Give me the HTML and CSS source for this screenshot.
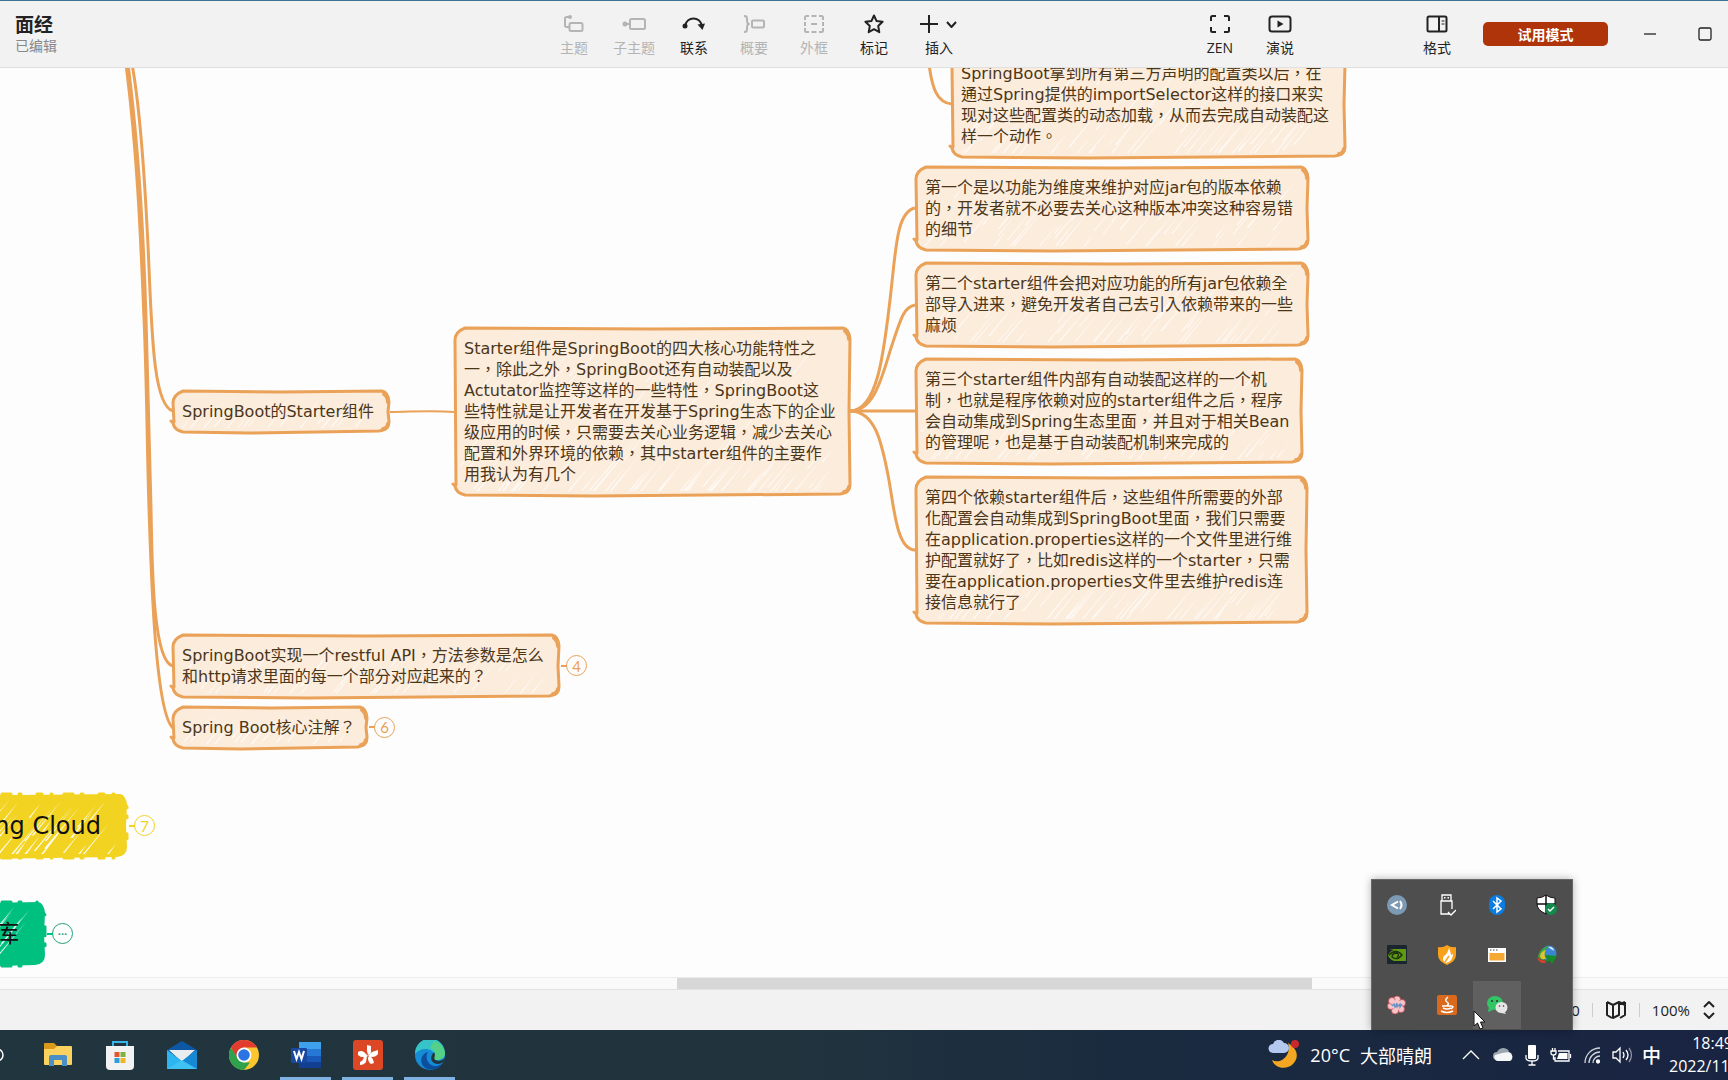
FILE: index.html
```html
<!DOCTYPE html>
<html lang="zh-CN">
<head>
    <meta charset="UTF-8">
    <meta name="viewport" content="width=device-width, initial-scale=1.0">
    <title>面经</title>
    <link rel="stylesheet" href="styles.css">
</head>
<body>
    <header class="header">
        <div class="doc-info">
            <h1>面经</h1>
            <p>已编辑</p>
        </div>
        <div class="tools">
            <button class="tool" disabled>
                <svg width="22" height="22" viewBox="0 0 22 22"><path d="M6 4H3.5a1.5 1.5 0 0 0-1.500 1.500v7A1.500 1.500 0 0 0 3.500 14H6"/><rect x="6.500" y="10" width="13" height="8" rx="1.500"/><circle class="dot" cx="7" cy="4" r="2"/></svg>
                <span>主题</span>
            </button>
            <button class="tool" disabled>
                <svg width="24" height="22" viewBox="0 0 24 22"><rect x="8" y="6" width="15" height="10" rx="1.500"/><path d="M3 11h5"/><circle class="dot" cx="3" cy="11" r="2.500"/></svg>
                <span>子主题</span>
            </button>
            <button class="tool">
                <svg width="24" height="22" viewBox="0 0 24 22"><path d="M3 13C5 3 18 3 20 13"/><circle class="dot" cx="3" cy="13" r="2.500"/><path class="dot" d="M15.500 11.500l7.500-1-2.500 6.500z"/></svg>
                <span>联系</span>
            </button>
            <button class="tool" disabled>
                <svg width="24" height="22" viewBox="0 0 24 22"><path d="M2 3c3 0 3 1 3 4 0 2 0 4 2 4-2 0-2 2-2 4 0 3 0 4-3 4"/><rect x="10" y="7.500" width="12" height="7" rx="1"/></svg>
                <span>概要</span>
            </button>
            <button class="tool" disabled>
                <svg width="24" height="22" viewBox="0 0 24 22"><path d="M7 3H4.500A1.500 1.500 0 0 0 3 4.500V7M3 9v4M3 15v2.500A1.500 1.500 0 0 0 4.500 19H7M9.500 19h5M17 19h2.500a1.500 1.500 0 0 0 1.500-1.500V15M21 13V9M21 7V4.500A1.500 1.500 0 0 0 19.500 3H17M14.500 3h-5M9 11h6"/></svg>
                <span>外框</span>
            </button>
            <button class="tool">
                <svg width="22" height="22" viewBox="0 0 22 22"><path d="M11 2.500l2.600 5.600 6 .7-4.400 4.200 1.100 6.200-5.300-3-5.300 3 1.100-6.200L2.400 8.800l6-.7z"/></svg>
                <span>标记</span>
            </button>
            <button class="tool tool-insert">
                <svg width="38" height="22" viewBox="0 0 38 22"><path d="M9 2v18M0 11h18M27 9l4.500 5L36 9"/></svg>
                <span>插入</span>
            </button>
        </div>
        <div class="tools view-tools">
            <button class="tool">
                <svg width="22" height="22" viewBox="0 0 22 22"><path d="M7 3H3.500a1.500 1.500 0 0 0-1.500 1.500V8M2 14v3.500A1.500 1.500 0 0 0 3.500 19H7M15 19h3.500a1.500 1.500 0 0 0 1.500-1.500V14M20 8V4.500A1.500 1.500 0 0 0 18.500 3H15"/></svg>
                <span>ZEN</span>
            </button>
            <button class="tool">
                <svg width="24" height="22" viewBox="0 0 24 22"><rect x="1.500" y="3.500" width="21" height="15" rx="2.500"/><path class="dot" d="M9.500 7.500v7l6-3.500z"/></svg>
                <span>演说</span>
            </button>
        </div>
        <button class="tool format-tool">
            <svg width="22" height="22" viewBox="0 0 22 22"><rect x="1.500" y="3.500" width="19" height="15" rx="1.500"/><path d="M13 3.500v15"/><path class="fine" d="M15.500 8h3M15.500 11h3"/></svg>
            <span>格式</span>
        </button>
        <button class="trial-btn">试用模式</button>
        <div class="window-btns">
            <button aria-label="最小化"><svg width="14" height="14" viewBox="0 0 14 14"><path d="M1 7h12"/></svg></button>
            <button aria-label="最大化"><svg width="14" height="14" viewBox="0 0 14 14"><rect x="1" y="1" width="12" height="12" rx="1.500"/></svg></button>
        </div>
    </header>

    <!-- zh-TW keeps the full-width punctuation centred in the nodes -->
    <main class="canvas" lang="zh-TW">
        <svg class="links" width="1400" height="900" viewBox="0 0 1400 900">
            <path d="M132 -4C141 45 146 130 149 200S154 338 173 343"/>
            <path d="M128 -4C140 90 144 180 146 250S150 380 151 440S153 594 173 598"/>
            <path d="M126 -4C138 90 141 180 144 250S147 380 149 440S155 645 173 660"/>
            <path class="thin" d="M390 344c20 0 40-2 64 0"/>
            <path d="M850 343C878 343 884 282 890 232S896 144 915 140"/>
            <path d="M850 343C876 343 883 304 892 277S904 239 915 237"/>
            <path d="M850 343h65"/>
            <path d="M850 343C876 343 882 377 888 407S896 482 915 482"/>
            <path d="M929 -4C932 20 937 35 952 36"/>
        </svg>

        <div class="node node-import">SpringBoot拿到所有第三方声明的配置类以后，在<br>通过Spring提供的importSelector这样的接口来实<br>现对这些配置类的动态加载，从而去完成自动装配这<br>样一个动作。</div>
        <div class="node node-first">第一个是以功能为维度来维护对应jar包的版本依赖<br>的，开发者就不必要去关心这种版本冲突这种容易错<br>的细节</div>
        <div class="node node-second">第二个starter组件会把对应功能的所有jar包依赖全<br>部导入进来，避免开发者自己去引入依赖带来的一些<br>麻烦</div>
        <div class="node node-third">第三个starter组件内部有自动装配这样的一个机<br>制，也就是程序依赖对应的starter组件之后，程序<br>会自动集成到Spring生态里面，并且对于相关Bean<br>的管理呢，也是基于自动装配机制来完成的</div>
        <div class="node node-fourth">第四个依赖starter组件后，这些组件所需要的外部<br>化配置会自动集成到SpringBoot里面，我们只需要<br>在application.properties这样的一个文件里进行维<br>护配置就好了，比如redis这样的一个starter，只需<br>要在application.properties文件里去维护redis连<br>接信息就行了</div>
        <div class="node node-detail">Starter组件是SpringBoot的四大核心功能特性之<br>一，除此之外，SpringBoot还有自动装配以及<br>Actutator监控等这样的一些特性，SpringBoot这<br>些特性就是让开发者在开发基于Spring生态下的企业<br>级应用的时候，只需要去关心业务逻辑，减少去关心<br>配置和外界环境的依赖，其中starter组件的主要作<br>用我认为有几个</div>
        <div class="node node-starter">SpringBoot的Starter组件</div>
        <div class="node node-restful">SpringBoot实现一个restful API，方法参数是怎么<br>和http请求里面的每一个部分对应起来的？<button class="fold">4</button></div>
        <div class="node node-notes">Spring Boot核心注解？<button class="fold">6</button></div>
        <div class="node topic topic-cloud">Spring Cloud<button class="fold">7</button></div>
        <div class="node topic topic-db">数据库<button class="fold fold-more">···</button></div>
    </main>

    <div class="scrollbar"><div class="thumb"></div></div>

    <footer class="statusbar">
        <span class="count">0</span>
        <span class="sep"></span>
        <button aria-label="导航"><svg width="22" height="22" viewBox="0 0 22 22"><path d="M2 3l6 3 6-3 6 3M2 3v13l5 3M20 3v13l-5 3M8 6v13l6-3V3M20 3l-5 2"/></svg></button>
        <span class="sep"></span>
        <span class="zoom">100%</span>
        <button aria-label="缩放"><svg width="14" height="20" viewBox="0 0 14 20"><path d="M2 7l5-5 5 5M2 13l5 5 5-5"/></svg></button>
    </footer>

    <nav class="taskbar">
        <svg class="search" width="4" height="14" viewBox="0 0 4 14"><circle cx="-3" cy="7" r="6"/></svg>
        <div class="apps">
            <button aria-label="文件资源管理器"><svg width="30" height="30" viewBox="0 0 30 30"><path fill="#d99a1c" d="M1 4q0-1 1-1h9l3 3v6H1z"/><path fill="#fbd25d" d="M1 9h10l3-3h14q1 0 1 1v17q0 1-1 1H2q-1 0-1-1z"/><path fill="#4a90c8" d="M6 26V17q0-2 2-2h14q2 0 2 2v9h-5v-6h-8v6z"/></svg></button>
            <button aria-label="Microsoft Store"><svg width="30" height="30" viewBox="0 0 30 30"><path fill="none" stroke="#38b4e8" stroke-width="2" d="M8 7V2h14v5"/><path fill="#f2f2f2" d="M1 6h28v20q0 4-4 4H5q-4 0-4-4z"/><path fill="#e0582d" d="M9.500 12h5v5h-5z"/><path fill="#7eb23a" d="M15.500 12h5v5h-5z"/><path fill="#2b9fd8" d="M9.500 18h5v5h-5z"/><path fill="#f0b428" d="M15.500 18h5v5h-5z"/></svg></button>
            <button aria-label="邮件"><svg width="30" height="30" viewBox="0 0 30 30"><path fill="#0d57a4" d="M0 10L15 1l15 9v5H0z"/><path fill="#e9edf0" d="M2 10h26L15 22z"/><path fill="#2cb5ee" d="M0 10l15 11 15-11v19H0z"/><path fill="#1688d4" d="M15 21l15-11v19z"/><path fill="#4cc9f5" d="M0 29h30L15 20z" opacity=".6"/></svg></button>
            <button aria-label="Chrome"><svg width="30" height="30" viewBox="0 0 30 30"><circle cx="15" cy="15" r="15" fill="#fbc62f"/><path fill="#e23b30" d="M2 7.500A15 15 0 0 1 28 7.500H15L8.500 19z"/><path fill="#2da14b" d="M2 7.500L9 19l6 3.500h6L15 30A15 15 0 0 1 2 7.500z"/><circle cx="15" cy="15" r="7.500" fill="#fff"/><circle cx="15" cy="15" r="5.800" fill="#2c74e4"/></svg></button>
            <button class="open" aria-label="Word"><svg width="30" height="30" viewBox="0 0 30 30"><path fill="#3fa0ec" d="M8 2h22v7H8z"/><path fill="#2778d4" d="M8 9h22v7H8z"/><path fill="#1a58b8" d="M8 16h22v6H8z"/><path fill="#123f92" d="M8 22h22v6H8z"/><rect y="8" width="16" height="15" rx="1" fill="#1848a0"/><path fill="none" stroke="#fff" stroke-width="2" d="M3 11l2.500 8L8 12l2.500 7L13 11"/></svg></button>
            <button class="open" aria-label="XMind"><svg width="30" height="30" viewBox="0 0 30 30"><rect width="30" height="30" rx="3" fill="#dc4726"/><path fill="#fff" d="M14 5l4 1v6q0 2-3 3l-1-4zM19 12l6-2v4q-2 3-6 3l-4-1zM5 12q3-2 6 0l4 4-2 1q-5 1-8-2zM14 16l-1 6q-2 3-6 3v-3q3-1 4-5zM16 16q4 1 5 7l-3 1q-3-2-3-6z"/></svg></button>
            <button class="open" aria-label="Edge"><svg width="30" height="30" viewBox="0 0 30 30"><circle cx="15" cy="15" r="15" fill="#168bd6"/><path fill="#36c4c8" d="M0 14A15 15 0 0 1 30 13c0 5-4 7-8 7-5 0-4-2-3-4 1-8-13-10-19-2z"/><path fill="#5dd475" d="M19 1a15 15 0 0 1 11 12c0 5-4 7-8 7-4 0-5-2-3-4 2-4 0-7-4-8z" opacity=".8"/><path fill="#0c4e9c" d="M13 12c-4 6 1 15 9 14l5-2c-4 7-13 7-18 3-5-5-3-13 4-15z"/><path fill="#21353f" d="M19 12c3 5-3 7 4 9 3 0 5-1 7-3 0 3-3 6-7 6-7 0-9-7-4-12z"/></svg></button>
        </div>
        <button class="weather">
            <svg width="32" height="30" viewBox="0 0 32 30"><path fill="#f5a623" d="M20 3c9 5 12 14 5 21-6 6-18 5-21-4 9 5 20-5 16-17z"/><circle cx="27" cy="4" r="4" fill="#c9282d"/><path fill="#b4c8f0" d="M5 13a4.500 4.500 0 0 1 0-9 6 6 0 0 1 11-1 5 5 0 0 1 0 10z"/></svg>
            <span>20°C</span>
            <span>大部晴朗</span>
        </button>
        <div class="tray">
            <button aria-label="显示隐藏的图标"><svg width="20" height="20" viewBox="0 0 20 20"><path d="M2 14l8-8 8 8"/></svg></button>
            <button aria-label="OneDrive"><svg width="22" height="20" viewBox="0 0 22 20"><path fill="#9ba5ad" stroke="none" d="M5 15a4 4 0 0 1 0-8 7 7 0 0 1 12-1l-7 9z"/><path fill="#f4f6f8" stroke="none" d="M5 16a4 4 0 0 1-2-6l7-2 7-1a5 5 0 0 1 1 9z"/></svg></button>
            <button aria-label="麦克风"><svg width="14" height="22" viewBox="0 0 14 22"><rect x="3" y="1" width="8" height="14" rx="1" fill="#fff" stroke="none"/><path d="M1 11v3q0 3 6 3t6-3v-3M7 17v4M3.500 21h7"/></svg></button>
            <button aria-label="电池"><svg width="22" height="18" viewBox="0 0 22 18"><path d="M8 5h11v10H5v-4"/><path fill="#fff" stroke="none" d="M9 7h8.500v6H7z"/><path d="M20.500 8v4M1 5h5v2q0 2-2.500 2T1 7zM2.500 2v3M5 2v3M3.500 9v4H5"/></svg></button>
            <button aria-label="网络"><svg width="18" height="18" viewBox="0 0 18 18"><path d="M2 17A15 15 0 0 1 17 2M6 17A11 11 0 0 1 17 6M10 17a7 7 0 0 1 7-7" opacity=".8"/><circle cx="15" cy="15.500" r="1.500" fill="#fff"/></svg></button>
            <button aria-label="音量"><svg width="22" height="18" viewBox="0 0 22 18"><path d="M1 6h3l4-4v14l-4-4H1zM11 6q2 3 0 6M14 4q4 5 0 10"/><path opacity=".5" d="M17 2q5 7 0 14"/></svg></button>
            <button class="ime">中</button>
        </div>
        <div class="clock">
            <span class="time">18:49</span>
            <span>2022/11</span>
        </div>

        <div class="tray-popup">
            <button aria-label="音频"><svg width="22" height="22" viewBox="0 0 22 22"><circle cx="11" cy="11" r="10" fill="#7d9ab5"/><path fill="none" stroke="#fff" stroke-width="2" d="M12 7.500L6 11l6 3.500M14 7q3 4 0 8"/></svg></button>
            <button aria-label="USB"><svg width="18" height="22" viewBox="0 0 18 22"><path fill="none" stroke="#fff" stroke-width="1.300" d="M4 7V1h9v6M12 20H3V7h11v8M10 18l3 3 5-5"/><path fill="#fff" d="M6 3h1.500v1.500H6zM9.500 3H11v1.500H9.500z"/></svg></button>
            <button aria-label="蓝牙"><svg width="18" height="22" viewBox="0 0 18 22"><rect x="1" y="1" width="16" height="20" rx="8" fill="#0b7ce0"/><path fill="none" stroke="#fff" stroke-width="1.500" d="M5 7l8 8-4 3V4l4 3-8 8"/></svg></button>
            <button aria-label="安全中心"><svg width="24" height="22" viewBox="0 0 24 22"><path fill="#fff" stroke="#111" d="M11 1q4 3 9 3v6q0 6-9 10-9-4-9-10V4q5 0 9-3z"/><path stroke="#111" stroke-width="1.500" d="M11 1v19M2 10h18"/><circle cx="16" cy="15" r="6" fill="#128a4c"/><path fill="none" stroke="#fff" stroke-width="1.500" d="M13 15l2 2 4-4"/></svg></button>
            <button aria-label="NVIDIA"><svg width="22" height="22" viewBox="0 0 22 22"><rect x="1" y="1" width="20" height="19" rx="1" fill="#1b2530"/><path fill="#5f9a12" d="M3 5h17v12H8q-5-2-6-6 2-4 6-5z"/><path fill="none" stroke="#1d3010" stroke-width="1.300" d="M3 11q7-7 13 0-5 6-10 2 0-4 5-4 3 2 0 4"/></svg></button>
            <button aria-label="火绒"><svg width="20" height="22" viewBox="0 0 20 22"><path fill="#f9a11b" d="M1 3q5 1 9-2 4 3 9 2v8q0 6-9 10-9-4-9-10z"/><path fill="#fff" d="M12 4q2 5 2 7l2-1q0 7-7 9-5-3-2-7 4-3 5-8z"/><path stroke="#f9a11b" stroke-width="1.500" d="M8 18l4-6"/></svg></button>
            <button aria-label="窗口"><svg width="20" height="18" viewBox="0 0 20 18"><path fill="#fff" d="M1 2h18v14H1z"/><path fill="#f5a833" d="M2.500 7h15v7.500h-15z"/><path stroke="#444" d="M3 4h1.500M6 4h1.500M9 4h1.500"/></svg></button>
            <button aria-label="IDM"><svg width="22" height="22" viewBox="0 0 22 22"><circle cx="13" cy="9" r="7.500" fill="#3985d2"/><path fill="#3ea33c" d="M2 12Q4 3 14 2q-7 3-6 14-5 0-6-4z"/><path fill="#e2c52c" d="M4 12q1-5 6-6-3 4 0 9-5 1-6-3z"/><path fill="#d8402c" d="M1 13q5 5 10 3l-2 3q-6 1-8-6z"/><path fill="#158c28" d="M9 11l12 1-5 8-2-3-5 1 2-3z"/><path fill="#dceaf8" d="M12 3q5-1 6 4-3-2-6-4z"/></svg></button>
            <button aria-label="输入法"><svg width="20" height="20" viewBox="0 0 20 20"><g fill="#f7c4c9" stroke="#c5434c" stroke-width=".7"><circle cx="10" cy="4.500" r="3.500"/><circle cx="15" cy="8" r="3.500"/><circle cx="14" cy="14" r="3.500"/><circle cx="8" cy="15.500" r="3.500"/><circle cx="4" cy="11" r="3.500"/><circle cx="5" cy="6" r="3.500"/></g><circle cx="10" cy="10" r="5" fill="#f7c4c9"/><path fill="none" stroke="#5f8fc5" stroke-width="1.300" d="M5 11l2-2 1 3 2-4v4l3-3v3l2-3"/></svg></button>
            <button aria-label="Java"><svg width="22" height="22" viewBox="0 0 22 22"><rect x="1" y="1" width="20" height="20" rx="2" fill="#d8691d"/><path fill="none" stroke="#fff" stroke-width="1.500" d="M12 3q-4 3-1 5t0 3M6 12h9q4 0 0 3M7 14q4 2 8 0M5 17q6 3 12 0"/></svg></button>
            <button class="hover" aria-label="微信"><svg width="22" height="20" viewBox="0 0 22 20"><ellipse cx="9" cy="8" rx="8" ry="7" fill="#31c566"/><path fill="#31c566" d="M3 12l-1 5 5-2z"/><ellipse cx="15.500" cy="12.500" rx="6" ry="5.500" fill="#e6e6e6"/><path fill="#e6e6e6" d="M18 16l2 3-5-1z"/><g fill="#333"><circle cx="6" cy="6" r="1"/><circle cx="11" cy="6" r="1"/><circle cx="13.500" cy="11" r=".8"/><circle cx="17.500" cy="11" r=".8"/></g></svg></button>
            <svg class="cursor" width="14" height="20" viewBox="0 0 14 20"><path fill="#fff" stroke="#111" d="M1 1v15l3.500-3 2.500 6 3-1-2.500-6H12z"/></svg>
        </div>
    </nav>

    <script src="sketch.js"></script>
</body>
</html>
```

FILE: styles.css
```css
* {
    box-sizing: border-box;
}
body {
    margin: 0;
    height: 100vh;
    display: flex;
    flex-direction: column;
    overflow: hidden;
    font-family: "Open Sans", "Noto Sans CJK SC", sans-serif;
    font-size: 14px;
    color: #222;
    background-color: #fdfdfd;
}
button {
    padding: 0;
    border: 0;
    background: none;
    font: inherit;
    color: inherit;
    display: flex;
    align-items: center;
    justify-content: center;
}
svg {
    display: block;
    flex: none;
}

/* header */
.header {
    height: 68px;
    flex: none;
    display: flex;
    align-items: center;
    background-color: #f2f2f2;
    border-top: 1px solid #3f7396;
    border-bottom: 1px solid #e0e0e0;
}
.doc-info {
    flex: 543 1 0;
    padding: 2px 0 0 15px;
}
.doc-info h1 {
    margin: 0;
    font-size: 19px;
    line-height: 22px;
}
.doc-info p {
    margin: 0;
    line-height: 20px;
    color: #85878b;
}
.tools {
    display: flex;
}
.tool {
    width: 60px;
    padding-top: 2px;
    flex-direction: column;
    gap: 3px;
    line-height: 20px;
}
.tool svg {
    fill: none;
    stroke: #222;
    stroke-width: 2;
    stroke-linejoin: round;
}
.tool .fine {
    stroke-width: 1;
}
.tool .dot {
    fill: #222;
    stroke: none;
}
.tool:disabled {
    color: #b4b4b4;
}
.tool:disabled svg {
    stroke: #b4b4b4;
}
.tool:disabled .dot {
    fill: #b4b4b4;
}
.tool-insert {
    width: 70px;
}
.view-tools {
    margin-left: 216px;
}
.format-tool {
    margin-left: 97px;
}
.trial-btn {
    width: 125px;
    height: 24px;
    margin-left: 16px;
    border-radius: 5px;
    background-color: #b0340a;
    color: #fff;
    font-weight: bold;
}
.window-btns {
    display: flex;
    gap: 41px;
    margin: 0 16px 0 35px;
}
.window-btns svg {
    fill: none;
    stroke: #222;
    stroke-width: 1.3;
}

/* mind map */
.canvas {
    position: relative;
    flex: 1;
    overflow: hidden;
}
.links {
    position: absolute;
    top: 0;
    left: 0;
    z-index: 0;
    fill: none;
    stroke: #eaa158;
    stroke-width: 3;
}
.links .thin {
    stroke-width: 2;
}
.node {
    position: absolute;
    z-index: 0;
    padding: 11px;
    font-family: "DejaVu Sans", "Noto Sans CJK TC", sans-serif;
    font-size: 16px;
    line-height: 21px;
    white-space: nowrap;
    color: #4b3618;
    --line: #eaa158;
    --fill: #fcecdc;
}
.sketch {
    position: absolute;
    top: 0;
    left: 0;
    z-index: -1;
    overflow: visible;
}
.sketch .shape {
    fill: var(--fill);
}
.sketch .edge {
    fill: none;
    stroke: var(--line);
    stroke-width: 3;
    stroke-linecap: round;
    stroke-linejoin: round;
}
.sketch .corner {
    fill: none;
    stroke: var(--line);
    stroke-width: 4;
    stroke-linecap: round;
}
.sketch .hatch {
    fill: #fff;
    opacity: 0.7;
}
.sketch .rough {
    fill: none;
    stroke: var(--fill);
    stroke-width: 3;
    stroke-linecap: round;
    stroke-dasharray: 5 9 1 12 9 8 2 16;
}
.node-import {
    left: 950px;
    top: -16px;
    width: 397px;
}
.node-first {
    left: 914px;
    top: 98px;
    width: 396px;
}
.node-second {
    left: 914px;
    top: 194px;
    width: 396px;
}
.node-third {
    left: 914px;
    top: 290px;
    width: 390px;
}
.node-fourth {
    left: 914px;
    top: 408px;
    width: 395px;
}
.node-detail {
    left: 453px;
    top: 259px;
    width: 399px;
}
.node-starter {
    left: 171px;
    top: 322px;
    width: 220px;
}
.node-restful {
    left: 171px;
    top: 566px;
    width: 390px;
}
.node-notes {
    left: 171px;
    top: 638px;
    width: 198px;
}
.topic {
    padding: 20px 28px;
    font-size: 24px;
    line-height: 26px;
    color: #111;
    text-align: right;
}
.topic-cloud {
    left: -91px;
    top: 725px;
    width: 220px;
    --line: #f3d321;
    --fill: #f3d321;
}
.topic-db {
    left: -91px;
    top: 833px;
    width: 138px;
    --line: #00c07f;
    --fill: #00c07f;
}
.topic .hatch {
    opacity: 0.9;
}
.topic-db .fold {
    border-color: #22a078;
    color: #22a078;
}
.fold {
    position: absolute;
    left: calc(100% + 5px);
    top: calc(50% - 11px);
    width: 21px;
    height: 21px;
    border: 1px solid var(--line);
    border-radius: 50%;
    font-family: Lato, sans-serif;
    font-size: 15px;
    line-height: 20px;
    color: var(--line);
}
.fold-more {
    font-size: 12px;
}
.fold::before {
    content: "";
    position: absolute;
    right: 100%;
    width: 6px;
    height: 2px;
    background-color: var(--line);
}

/* scrollbar and status bar */
.scrollbar {
    height: 12px;
    flex: none;
    display: flex;
    background-color: #fafafa;
    border-top: 1px solid #ececec;
}
.thumb {
    width: 36.7%;
    margin-left: 39.2%;
    background-color: #d7d7d7;
}
.statusbar {
    height: 41px;
    flex: none;
    display: flex;
    align-items: center;
    justify-content: flex-end;
    gap: 12px;
    padding-right: 12px;
    font-size: 15px;
    background-color: #f2f2f2;
    border-top: 1px solid #e2e2e2;
}
.statusbar svg {
    fill: none;
    stroke: #222;
    stroke-width: 2;
    stroke-linejoin: round;
}
.statusbar .sep {
    width: 1px;
    height: 14px;
    background-color: #ccc;
}

/* windows taskbar */
.taskbar {
    position: relative;
    height: 50px;
    flex: none;
    display: flex;
    align-items: center;
    background: linear-gradient(90deg, #21353e 0%, #21343e 45%, #1a2b3f 65%, #192442 100%);
    color: #fff;
}
.search {
    fill: none;
    stroke: #fff;
    stroke-width: 1.5;
}
.apps {
    display: flex;
    align-self: stretch;
    gap: 11px;
    margin-left: 28px;
    flex: 1;
}
.apps button {
    width: 51px;
    border-top: 3px solid transparent;
    border-bottom: 3px solid transparent;
}
.apps .open {
    border-bottom-color: #7fb2e2;
}
.weather {
    gap: 10px;
    font-size: 18px;
}
.tray {
    display: flex;
    align-items: center;
    gap: 11px;
    margin-left: 29px;
}
.tray svg {
    fill: none;
    stroke: #fff;
    stroke-width: 1.3;
}
.ime {
    margin-left: -3px;
    font-size: 19px;
    font-weight: 500;
}
.clock {
    width: 64px;
    margin: 0 -5px 0 8px;
    display: flex;
    flex-direction: column;
    font-size: 16px;
    line-height: 23px;
}
.clock .time {
    align-self: flex-end;
}
.tray-popup {
    position: absolute;
    right: 155px;
    bottom: 50px;
    width: 202px;
    display: grid;
    grid-template-columns: repeat(4, 50px);
    grid-auto-rows: 50px;
    background-color: #4e4e4e;
    border: 1px solid #686868;
    border-bottom: 0;
    box-shadow: 0 0 8px rgba(0, 0, 0, 0.3);
}
.tray-popup .hover {
    margin: 1px;
    background-color: #606060;
}
.cursor {
    position: absolute;
    left: 101px;
    bottom: 0;
}
```

FILE: sketch.js
```javascript
// hand drawn outline and hatching behind every node
let seed = 7;
function rand() {
    seed = (seed * 16807) % 2147483647;
    return seed / 2147483647;
}

function add(svg, cls, d) {
    const path = document.createElementNS('http://www.w3.org/2000/svg', 'path');
    path.setAttribute('class', cls);
    path.setAttribute('d', d);
    svg.appendChild(path);
}

// thin strokes leaning to the right, spread over the whole box
function hatches(w, h, count, thick) {
    let d = '';
    for (let i = 0; i < count; i++) {
        const len = Math.min(8 + rand() * 40, h - 14);
        const x = 6 + (w - 16 - len) * (i + rand()) / count;
        const y = rand() < 0.4 ? h - 5 : 6 + len + rand() * (h - 12 - len);
        const t = thick * (0.5 + rand());
        d += `M${x} ${y}L${x + len * 0.85} ${y - len}L${x + t + 1} ${y}Z`;
    }
    return d;
}

document.querySelectorAll('.node').forEach(node => {
    const w = node.offsetWidth;
    const h = node.offsetHeight;
    const svg = document.createElementNS('http://www.w3.org/2000/svg', 'svg');
    svg.setAttribute('class', 'sketch');
    svg.setAttribute('width', w);
    svg.setAttribute('height', h);

    const outline = `M0 ${h - 12}L2 ${h - 10}Q3 ${h - 3} 12 ${h - 1}L${w * 0.35} ${h}L${w - 12} ${h - 2}Q${w - 2} ${h - 3} ${w - 2} ${h - 12}L${w - 3} ${h / 2}L${w - 2} 12Q${w - 3} 2 ${w - 9} 1L${w / 2} 2L12 1Q2 5 2 13L3 ${h - 11}`;
    add(svg, 'shape', outline);
    if (node.classList.contains('topic')) {
        add(svg, 'rough', `M4 1H${w - 10}L${w - 2} 14V${h - 12}M4 ${h - 1}H${w - 12}`);
        add(svg, 'hatch', hatches(w, h, Math.round(w / 6), 1));
    } else {
        add(svg, 'hatch', hatches(w, h, Math.round(w * h / 700) + 6, 0.8));
        add(svg, 'edge', outline);
        add(svg, 'corner', `M${w - 7} 4Q${w - 3} 7 ${w - 3} 12M${w - 3} ${h - 9}Q${w - 4} ${h - 4} ${w - 8} ${h - 4}`);
    }
    node.prepend(svg);
});
```
